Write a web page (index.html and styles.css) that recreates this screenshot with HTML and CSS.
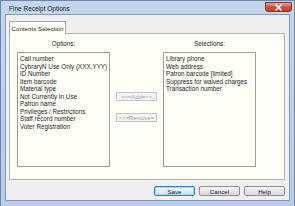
FILE: index.html
```html
<!DOCTYPE html>
<html>
<head>
<meta charset="utf-8">
<link rel="stylesheet" href="styles.css">
</head>
<body>
<div class="window">
  <div class="titlebar">
    <span class="title">Fine Receipt Options</span>
    <div class="close"><svg width="9" height="7" viewBox="0 0 9 7"><path d="M1.5 0.5 L7.5 6.5 M7.5 0.5 L1.5 6.5" stroke="#fff" stroke-width="1.6"/></svg></div>
  </div>
  <div class="client">
    <div class="tabs"><div class="tab">Contents Selection</div></div>
    <div class="panel">
      <div class="col">
        <div class="label">Options:</div>
        <div class="list">
          <div>Call number</div>
          <div>CybraryN Use Only (XXX,YYY)</div>
          <div>ID Number</div>
          <div>Item barcode</div>
          <div>Material type</div>
          <div>Not Currently In Use</div>
          <div>Patron name</div>
          <div>Privileges / Restrictions</div>
          <div>Staff record number</div>
          <div>Voter Registration</div>
        </div>
      </div>
      <div class="mid">
        <div class="mbtn add">&lt;&lt;=Add=&gt;&gt;</div>
        <div class="mbtn">&lt;&lt;=Remove=</div>
      </div>
      <div class="col">
        <div class="label">Selections:</div>
        <div class="list">
          <div>Library phone</div>
          <div>Web address</div>
          <div>Patron barcode [limited]</div>
          <div>Suppress for waived charges</div>
          <div>Transaction number</div>
        </div>
      </div>
    </div>
    <div class="buttons">
      <div class="btn default">Save</div>
      <div class="btn">Cancel</div>
      <div class="btn">Help</div>
    </div>
  </div>
</div>
</body>
</html>
```
FILE: styles.css
```css
html, body {
  margin: 0;
  padding: 0;
  background: #ffffff;
}
body {
  font-family: "Liberation Sans", Arial, sans-serif;
  font-size: 6.3px;
  color: #1e1e1e;
}
.window {
  width: 295px;
  height: 206px;
  box-sizing: border-box;
  background: linear-gradient(to bottom, #c3d6ee 0%, #bed2ea 40%, #b7cce6 100%);
  border: 1px solid #6f86a6;
  border-bottom: none;
  display: flex;
  flex-direction: column;
  padding: 0 4px 5px 4px;
}
.titlebar {
  height: 13px;
  display: flex;
  align-items: center;
  justify-content: space-between;
  position: relative;
}
.title {
  font-size: 6.5px;
  color: #1a1a1a;
  margin-left: 4px;
  margin-top: 1px;
}
.close {
  width: 27px;
  height: 10px;
  margin-top: -1px;
  margin-right: -2px;
  box-sizing: border-box;
  border: 1px solid #7a3a30;
  border-radius: 0 0 3px 3px;
  background: linear-gradient(to bottom, #e8a594 0%, #d0553e 50%, #c23e28 100%);
  display: flex;
  align-items: center;
  justify-content: center;
}
.client {
  flex: 1;
  background: #f0f0f0;
  border: 1px solid #8398b5;
  display: flex;
  flex-direction: column;
  padding: 6px 4px 0 3px;
}
.tabs {
  display: flex;
  height: 12px;
}
.tab {
  width: 57px;
  box-sizing: border-box;
  height: 13px;
  border: 1px solid #a8a8a8;
  border-bottom: none;
  background: #fffff7;
  display: flex;
  align-items: center;
  justify-content: center;
  font-size: 6.2px;
  position: relative;
  z-index: 1;
}
.panel {
  height: 147px;
  box-sizing: border-box;
  border: 1px solid #b4b4b4;
  background: #fffff7;
  display: flex;
  align-items: flex-start;
  padding: 5px 0 0 7px;
}
.col {
  width: 93px;
  display: flex;
  flex-direction: column;
}
.label {
  height: 9px;
  line-height: 9px;
  text-align: center;
  font-size: 6.3px;
  margin-bottom: 4px;
}
.list {
  height: 115px;
  box-sizing: border-box;
  border: 1px solid #9c9c9c;
  background: #fffff7;
  padding: 2px 0 0 2px;
  line-height: 7.55px;
  white-space: nowrap;
}
.mid {
  width: 41px;
  margin: 0 6px;
  display: flex;
  flex-direction: column;
  padding-top: 53px;
}
.mbtn {
  height: 9px;
  box-sizing: border-box;
  border: 1px solid #c4c4c4;
  background: #f4f4f4;
  color: #a3a3a3;
  font-size: 5.8px;
  display: flex;
  align-items: center;
  justify-content: center;
  white-space: nowrap;
  overflow: hidden;
}
.add {
  margin-bottom: 12px;
}
.buttons {
  display: flex;
  justify-content: flex-end;
  gap: 4px;
  margin-top: 6px;
  padding-right: 0;
}
.btn {
  width: 41px;
  height: 10px;
  box-sizing: border-box;
  border: 1px solid #8e8e8e;
  border-radius: 2px;
  background: linear-gradient(to bottom, #f6f6f6 0%, #e6e6e6 50%, #d8d8d8 100%);
  display: flex;
  align-items: center;
  justify-content: center;
  font-size: 6.2px;
  color: #1a1a1a;
}
.btn.default {
  border-color: #3c7fb1;
  box-shadow: inset 0 0 0 1px #a6d6f4;
  background: linear-gradient(to bottom, #eaf6fd 0%, #d9f0fc 50%, #bee6fd 100%);
}
```
